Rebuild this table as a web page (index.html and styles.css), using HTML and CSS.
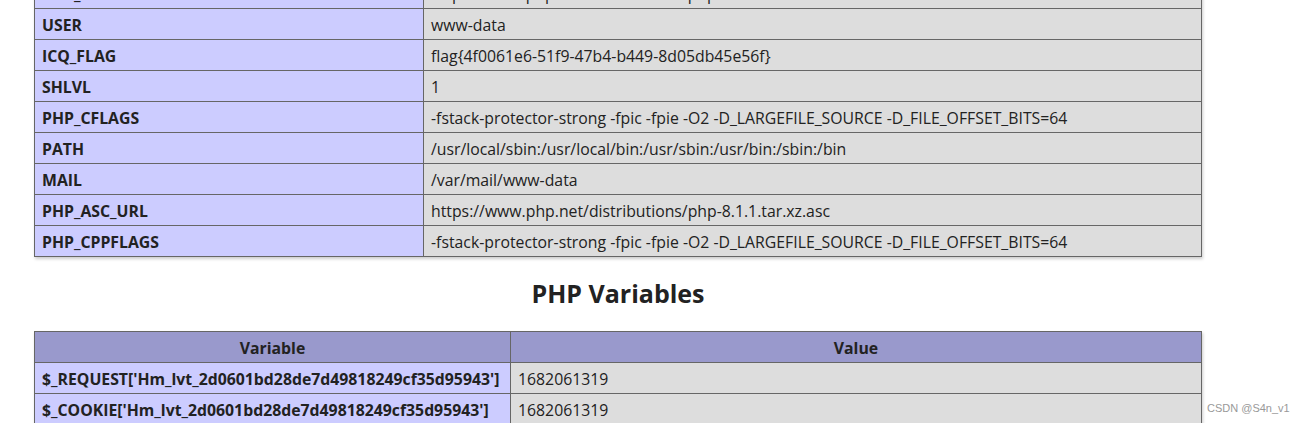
FILE: index.html
```html
<!DOCTYPE html>
<html>
<head>
<meta charset="utf-8">
<link rel="stylesheet" href="styles.css">
</head>
<body>
<div class="page">
<table class="info">
<tr><td class="e">PHP_URL</td><td class="v">https://www.php.net/distributions/php-8.1.1.tar.xz</td></tr>
<tr><td class="e">USER</td><td class="v">www-data</td></tr>
<tr><td class="e">ICQ_FLAG</td><td class="v">flag{4f0061e6-51f9-47b4-b449-8d05db45e56f}</td></tr>
<tr><td class="e">SHLVL</td><td class="v">1</td></tr>
<tr><td class="e">PHP_CFLAGS</td><td class="v">-fstack-protector-strong -fpic -fpie -O2 -D_LARGEFILE_SOURCE -D_FILE_OFFSET_BITS=64</td></tr>
<tr><td class="e">PATH</td><td class="v">/usr/local/sbin:/usr/local/bin:/usr/sbin:/usr/bin:/sbin:/bin</td></tr>
<tr><td class="e">MAIL</td><td class="v">/var/mail/www-data</td></tr>
<tr><td class="e">PHP_ASC_URL</td><td class="v">https://www.php.net/distributions/php-8.1.1.tar.xz.asc</td></tr>
<tr><td class="e">PHP_CPPFLAGS</td><td class="v">-fstack-protector-strong -fpic -fpie -O2 -D_LARGEFILE_SOURCE -D_FILE_OFFSET_BITS=64</td></tr>
</table>
<h2 class="title">PHP Variables</h2>
<table class="info vars">
<tr class="h"><th class="hv">Variable</th><th>Value</th></tr>
<tr><td class="e">$_REQUEST['Hm_lvt_2d0601bd28de7d49818249cf35d95943']</td><td class="v">1682061319</td></tr>
<tr><td class="e">$_COOKIE['Hm_lvt_2d0601bd28de7d49818249cf35d95943']</td><td class="v">1682061319</td></tr>
</table>
</div>
<div class="mark">CSDN @S4n_v1</div>
</body>
</html>
```

FILE: styles.css
```css
html, body {
  margin: 0;
  padding: 0;
  background: #fff;
  overflow: hidden;
  height: 423px;
}
body {
  position: relative;
  font-family: "Open Sans", "Noto Sans", sans-serif;
  color: #222;
}
.page {
  margin-top: -23px;
  padding-left: 34px;
}
.info {
  border-collapse: collapse;
  width: 1168px;
  table-layout: fixed;
  box-shadow: 1px 2px 3px #ccc;
}
.info td, .info th {
  border: 1px solid #666;
  font-size: 15.8px;
  line-height: 20px;
  padding: 6px 7px 4px;
  height: 20px;
  box-sizing: content-box;
  white-space: nowrap;
  overflow: hidden;
  text-align: left;
}
.info .e {
  background: #ccf;
  font-weight: bold;
  width: 374px;
}
.info .v {
  background: #ddd;
}
.vars .hv {
  width: 461px;
}
.vars th {
  background: #99c;
  font-weight: bold;
  text-align: center;
}
.title {
  margin: 0;
  height: 74px;
  box-sizing: border-box;
  padding-top: 19px;
  font-size: 25px;
  line-height: 34px;
  font-weight: bold;
  text-align: center;
  width: 1168px;
}
.mark {
  position: absolute;
  left: 1207px;
  top: 402px;
  font-family: "Liberation Sans", Arial, sans-serif;
  font-size: 11px;
  color: #999;
}
```
